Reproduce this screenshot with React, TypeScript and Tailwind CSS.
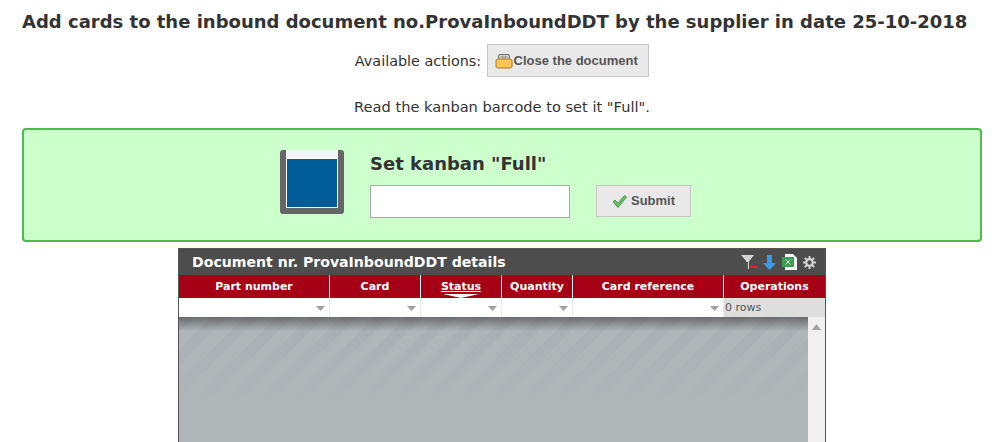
const cols = [
  { name: "Part number", w: "w-[151px]" },
  { name: "Card", w: "w-[91px]" },
  { name: "Status", w: "w-[81px]", sorted: true },
  { name: "Quantity", w: "w-[71px]" },
  { name: "Card reference", w: "w-[151px]" },
];

function Caret() {
  return (
    <svg width="9" height="5" viewBox="0 0 9 5" className="absolute right-[4px] top-[8px]">
      <path d="M0 0h9L4.500 5z" fill="#a0a0a0" />
    </svg>
  );
}

function FolderIcon() {
  return (
    <svg width="18" height="16" viewBox="0 0 18 16" className="shrink-0">
      <path d="M4 1.500h10l1 5H3z" fill="#c9c9c9" stroke="#777" strokeWidth="1" />
      <path d="M6 4h6" stroke="#888" />
      <path d="M1 8c0-1.500 1-2 2-2h12c1 0 2 .5 2 2v5.500c0 1-.7 1.500-1.500 1.500h-13C1.700 15 1 14.500 1 13.500z" fill="#fbc454" stroke="#a87c22" />
    </svg>
  );
}

function CheckIcon() {
  return (
    <svg width="15" height="13" viewBox="0 0 15 13" className="shrink-0">
      <path d="M1 7l2-2 3 3 6.500-7.500L14.500 2 6 12.500z" fill="#6cbb68" stroke="#3f8a3f" strokeWidth="0.8" />
    </svg>
  );
}

function KanbanIcon() {
  return (
    <div className="w-[64px] h-[64px] bg-[#666666] rounded-[3px] px-[6px] pb-[6px] shrink-0">
      <div className="h-full bg-[#f2f2f2] flex flex-col">
        <div className="h-[8px]" />
        <div className="flex-1 border border-white bg-[#005c99]" />
      </div>
    </div>
  );
}

function FilterIcon() {
  return (
    <svg width="16" height="16" viewBox="0 0 16 16" className="shrink-0">
      <path d="M0 1h13L8 7.500V15H5.500V7.500z" fill="#d4d4d4" />
      <path d="M5.500 8h1.200v7H5.500z" fill="#222222" />
      <path d="M9 12h7v2H9z" fill="#d9262a" />
    </svg>
  );
}

function DownIcon() {
  return (
    <svg width="13" height="15" viewBox="0 0 13 15" className="shrink-0">
      <path d="M4 0h5v8h4L6.500 15 0 8h4z" fill="#3b9ae8" />
    </svg>
  );
}

function ExcelIcon() {
  return (
    <svg width="15" height="16" viewBox="0 0 15 16" className="shrink-0">
      <path d="M3 0h8l4 4v12H3z" fill="#f4f4f4" />
      <path d="M0 3h12v10H0z" fill="#3c9c54" />
      <path d="M3.500 5.500l5 5M8.500 5.500l-5 5" stroke="#cfe8d5" strokeWidth="1" />
    </svg>
  );
}

function GearIcon() {
  return (
    <svg width="13" height="13" viewBox="0 0 13 13" className="shrink-0">
      <circle cx="6.500" cy="6.500" r="3.300" fill="none" stroke="#d6d6d6" strokeWidth="2.200" />
      <path d="M6.500 0v2.500M6.500 10.500V13M0 6.500h2.500M10.500 6.500H13M1.900 1.900l1.800 1.800M9.300 9.300l1.800 1.800M11.100 1.900L9.300 3.700M3.700 9.300l-1.800 1.800" stroke="#d6d6d6" strokeWidth="2" />
    </svg>
  );
}

export default function App() {
  return (
    <div className="w-[1003px] h-[442px] overflow-hidden bg-white text-[#333333] font-['DejaVu_Sans',sans-serif] text-[14.400px]">
      <div className="w-[960px] ml-[22px]">
        <h1 className="h-[44px] pt-[11px] text-[18px] leading-[22px] font-bold text-[#333333] whitespace-nowrap">
          Add cards to the inbound document no.ProvaInboundDDT by the supplier in date 25-10-2018
        </h1>
        <div className="flex items-center justify-center h-[33px] gap-[6px]">
          <span className="leading-[32px]">Available actions:</span>
          <button className="h-[33px] w-[162px] pr-[4px] flex items-center justify-center gap-[1px] bg-[#e9e9e9] border border-[#c6c6c6] font-['Liberation_Sans',sans-serif] font-bold text-[13px] text-[#555555]">
            <FolderIcon />
            Close the document
          </button>
        </div>
        <p className="mt-[19px] h-[18px] leading-[22px] text-center text-[14.600px]">Read the kanban barcode to set it "Full".</p>
        <div className="mt-[14px] h-[114px] border-2 border-[#4fb954] rounded-[4px] bg-[#ccffcc] flex pl-[256px] pt-[20px]">
          <KanbanIcon />
          <div className="ml-[26px]">
            <h2 className="pt-[2px] text-[18px] leading-[24px] font-bold text-[#333333] whitespace-nowrap">Set kanban "Full"</h2>
            <div className="flex mt-[9px] gap-[26px]">
              <input className="w-[200px] h-[33px] bg-white border border-[#a9a9a9]" />
              <button className="w-[95px] h-[32px] flex items-center justify-center gap-[4px] bg-[#e9e9e9] border border-[#c6c6c6] font-['Liberation_Sans',sans-serif] font-bold text-[13px] text-[#555555]">
                <CheckIcon />
                Submit
              </button>
            </div>
          </div>
        </div>
      </div>
      <div className="mt-[6px] ml-[178px] w-[648px] border border-[#555555] border-b-0 h-[194px] flex flex-col">
        <div className="h-[26px] shrink-0 bg-[#4d4d4d] flex items-center pl-[13px] pr-[9px]">
          <span className="flex-1 text-white font-bold text-[14.100px] leading-[26px] whitespace-nowrap">Document nr. ProvaInboundDDT details</span>
          <div className="flex items-center gap-[6px]">
            <FilterIcon />
            <DownIcon />
            <ExcelIcon />
            <GearIcon />
          </div>
        </div>
        <div className="flex h-[23px] shrink-0 bg-[#a50016] text-white font-bold text-[11px] leading-[23px]">
          {cols.map((c) => (
            <div key={c.name} className={`${c.w} relative text-center border-r border-white whitespace-nowrap`}>
              <span className={c.sorted ? "underline" : ""}>{c.name}</span>
              {c.sorted && (
                <svg width="36" height="4" viewBox="0 0 36 4" className="absolute left-[22px] bottom-0">
                  <path d="M0 0h36L18 4z" fill="#ffffff" />
                </svg>
              )}
            </div>
          ))}
          <div className="flex-1 text-center whitespace-nowrap">Operations</div>
        </div>
        <div className="flex h-[19px] shrink-0 bg-white text-[11px] leading-[20px] text-[#555555]">
          {cols.map((c) => (
            <div key={c.name} className={`${c.w} relative border-r border-[#ececec]`}>
              <Caret />
            </div>
          ))}
          <div className="flex-1 bg-[#dedede] pl-[1px] whitespace-nowrap">0 rows</div>
        </div>
        <div className="flex-1 flex min-h-0">
          <div className="flex-1 bg-[#aeb6b8] bg-[linear-gradient(to_bottom,rgba(70,70,70,0.65),rgba(70,70,70,0)_14px),linear-gradient(to_bottom,rgba(174,182,184,0),#aeb6b8_90px),repeating-linear-gradient(135deg,#a8b0b3_0px,#a8b0b3_11px,#aeb6b8_11px,#aeb6b8_23px)]" />
          <div className="w-[17px] bg-[#f0f0f0] flex justify-center pt-[7px]">
            <svg width="9" height="6" viewBox="0 0 9 6">
              <path d="M4.500 0L9 6H0z" fill="#a3a3a3" />
            </svg>
          </div>
        </div>
      </div>
    </div>
  );
}
